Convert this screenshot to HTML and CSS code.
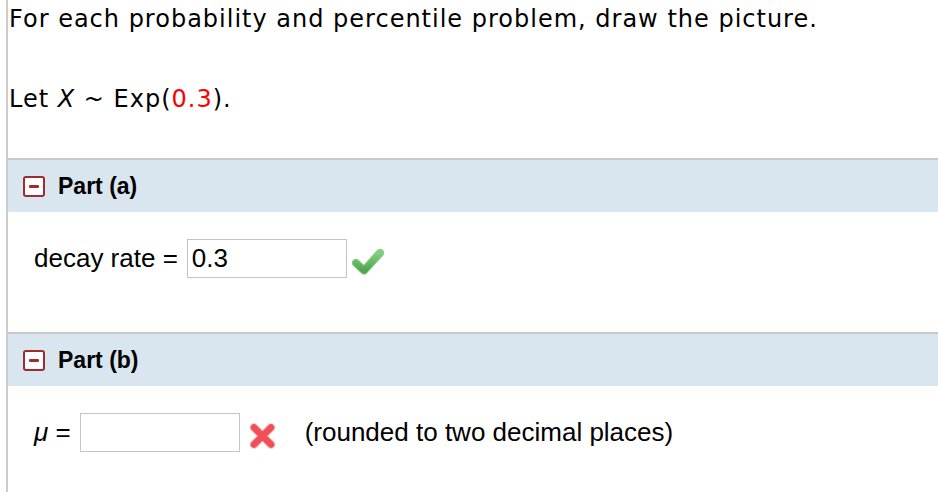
FILE: index.html
```html
<!DOCTYPE html>
<html>
<head>
<meta charset="utf-8">
<link rel="stylesheet" href="styles.css">
</head>
<body>
<div class="page">
  <div class="intro">
    <p class="line first">For each probability and percentile problem, draw the picture.</p>
    <p class="line second">Let <i>X</i> ~ Exp(<span class="red">0.3</span>).</p>
  </div>

  <div class="part">
    <div class="part-head">
      <span class="toggle"><span class="bar"></span></span>
      <span class="part-title">Part (a)</span>
    </div>
    <div class="part-body first-body">
      <span class="label">decay rate =</span>
      <span class="field">0.3</span>
      <svg class="check" width="34" height="29" viewBox="0 0 34 29">
        <defs>
          <linearGradient id="g" x1="0" y1="0" x2="0" y2="1">
            <stop offset="0" stop-color="#7fd07a"/>
            <stop offset="1" stop-color="#4fa64b"/>
          </linearGradient>
        </defs>
        <path d="M5 16 L13 23.5 L29 6" fill="none" stroke="#4e9e4a" stroke-width="8.5" stroke-linecap="round" stroke-linejoin="round" opacity="0.55"/>
        <path d="M5 16 L13 23.5 L29 6" fill="none" stroke="url(#g)" stroke-width="6.5" stroke-linecap="round" stroke-linejoin="round"/>
      </svg>
    </div>
  </div>

  <div class="part">
    <div class="part-head">
      <span class="toggle"><span class="bar"></span></span>
      <span class="part-title">Part (b)</span>
    </div>
    <div class="part-body">
      <span class="label mu"><i>μ</i> =</span>
      <span class="field"></span>
      <svg class="cross" width="27" height="28" viewBox="0 0 27 28">
        <path d="M5 5.5 L22 22.5 M22 5.5 L5 22.5" fill="none" stroke="#f28c90" stroke-width="8.5" stroke-linecap="round" opacity="0.6"/>
        <path d="M5 5.5 L22 22.5 M22 5.5 L5 22.5" fill="none" stroke="#ef5058" stroke-width="6.5" stroke-linecap="round"/>
      </svg>
      <span class="note">(rounded to two decimal places)</span>
    </div>
  </div>
</div>
</body>
</html>
```

FILE: styles.css
```css
html, body {
  margin: 0;
  padding: 0;
  background: #ffffff;
}

.page {
  margin-left: 6px;
  border-left: 2px solid #cccccc;
  min-height: 492px;
  box-sizing: border-box;
  color: #000000;
}

.intro {
  padding-top: 5px;
  padding-bottom: 45px;
}

.line {
  margin: 0;
  padding-left: 1px;
  font-family: "DejaVu Sans", Verdana, sans-serif;
  font-size: 24px;
  letter-spacing: 1px;
  line-height: 28px;
  height: 28px;
  white-space: nowrap;
}

.line.second {
  margin-top: 52px;
}

.red {
  color: #ff0000;
}

.part-head {
  border-top: 2px solid #c8c8c8;
  background: #d9e5ef;
  height: 52px;
  display: flex;
  align-items: center;
  padding-left: 15px;
}

.toggle {
  width: 18px;
  height: 17px;
  border: 2px solid #a02a2e;
  border-radius: 3px;
  background: #ffffff;
  display: flex;
  align-items: center;
  justify-content: center;
  margin-right: 13px;
  margin-top: 1px;
}

.bar {
  width: 10px;
  height: 3px;
  background: #a02a2e;
  border-radius: 1px;
}

.part-title {
  font-family: "Liberation Sans", Arial, sans-serif;
  font-weight: bold;
  font-size: 23px;
}

.part-body {
  display: flex;
  align-items: center;
  padding: 27px 0 54px 26px;
  font-family: "Liberation Sans", Arial, sans-serif;
  font-size: 26px;
}

.label {
  margin-right: 9px;
  white-space: nowrap;
}

.label.mu {
  margin-right: 9px;
}

.field {
  width: 154px;
  height: 37px;
  border: 1px solid #c4c4c4;
  box-sizing: content-box;
  display: flex;
  align-items: center;
  padding-left: 4px;
  font-size: 26px;
  line-height: 37px;
}

.field:empty {
  padding-left: 0;
  width: 158px;
}

.check {
  margin-left: 4px;
  margin-top: 6px;
}

.cross {
  margin-left: 9px;
  margin-top: 7px;
}

.note {
  margin-left: 29px;
  white-space: nowrap;
}
```
